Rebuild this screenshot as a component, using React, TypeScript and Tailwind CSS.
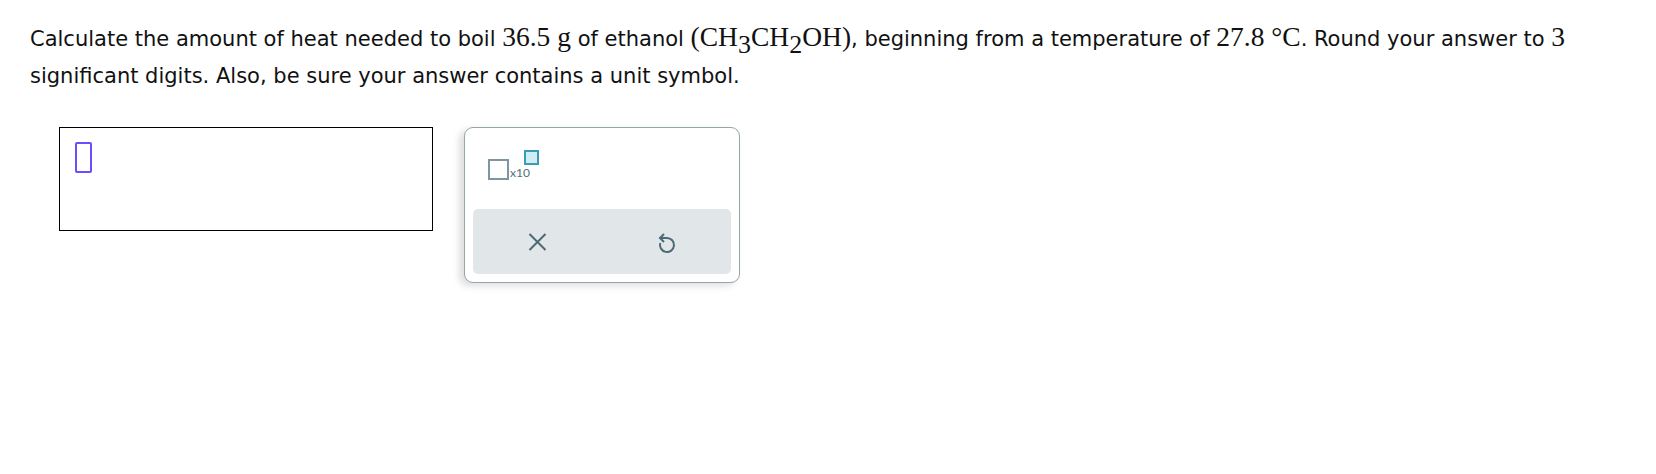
import React from "react";

export default function App() {
  const serif = { fontFamily: '"Liberation Serif", "Times New Roman", serif' };
  return (
    <div className="w-[1656px] h-[474px] bg-white" style={{ fontFamily: '"DejaVu Sans", Verdana, sans-serif' }}>
      <div className="pl-[30px] pt-[18px] text-[21px] leading-[37px] text-[#111111]">
        <p>
          Calculate the amount of heat needed to boil{" "}
          <span className="text-[27.5px]" style={serif}>36.5 g</span> of ethanol{" "}
          <span className="text-[27.5px]" style={serif}>
            (CH<span className="relative top-[7px] text-[26px]">3</span>CH<span className="relative top-[7px] text-[26px]">2</span>OH)
          </span>
          , beginning from a temperature of{" "}
          <span className="text-[27.5px]" style={serif}>27.8 °C</span>. Round your answer to{" "}
          <span className="text-[27.5px]" style={serif}>3</span>
          <br />
          significant digits. Also, be sure your answer contains a unit symbol.
        </p>
      </div>
      <div className="flex items-start gap-[31px] pl-[59px] pt-[32px]">
        <div className="w-[374px] h-[104px] border border-black pl-[15px] pt-[14px]">
          <div className="w-[17px] h-[31px] border-2 border-[#6b4cff] rounded-[2px]" />
        </div>
        <div className="w-[276px] h-[156px] rounded-[9px] border border-[#95a5aa] bg-white shadow-[-5px_3px_7px_rgba(0,0,0,0.13)] p-[8px] flex flex-col">
          <div className="flex items-start pl-[15px] pt-[14px]">
            <div className="mt-[9px] w-[21px] h-[21px] border-2 border-[#7e969f] bg-white" />
            <span className="mt-[16px] ml-[1px] text-[12px] leading-[14px] text-[#52707a]" style={{ fontFamily: 'Lato, "Open Sans", sans-serif' }}>x10</span>
            <div className="-ml-[6px] w-[15px] h-[15px] border-2 border-[#3a9bb6] bg-[#cfedf3]" />
          </div>
          <div className="mt-[29px] h-[65px] rounded-[5px] bg-[#e1e6e8] flex items-center">
            <div className="w-1/2 flex justify-center">
              <svg width="19" height="18" viewBox="0 0 19 18">
                <path d="M1.5 1 L17.5 17 M17.5 1 L1.5 17" stroke="#4c6a75" strokeWidth="2" fill="none" />
              </svg>
            </div>
            <div className="w-1/2 flex justify-center">
              <svg width="24" height="26" viewBox="0 0 24 26">
                <path d="M5 9 H12 A7 7 0 1 1 5.3 14" stroke="#4c6a75" strokeWidth="2" fill="none" />
                <path d="M9 5 L5 9 L9 13" stroke="#4c6a75" strokeWidth="2" fill="none" />
              </svg>
            </div>
          </div>
        </div>
      </div>
    </div>
  );
}
